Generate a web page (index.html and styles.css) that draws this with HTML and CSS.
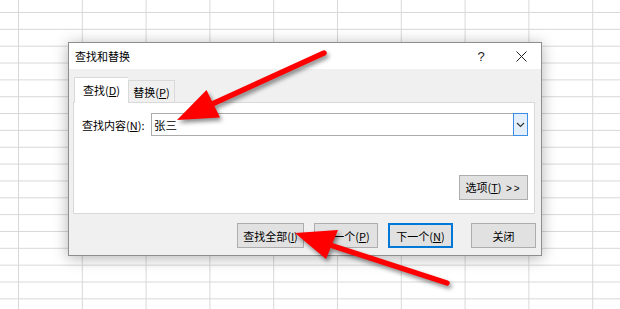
FILE: index.html
```html
<!DOCTYPE html>
<html lang="zh-CN">

<head>
    <meta charset="UTF-8">
    <title>查找和替换</title>
    <link rel="stylesheet" href="styles.css">
</head>

<body>

    <div class="dialog">
        <div class="titlebar">
            <span class="title">查找和替换</span>
            <span class="help">?</span>
            <span class="close">
                <svg width="11" height="11" viewBox="0 0 11 11">
                    <path d="M0.5 0.5 L10.5 10.5 M10.5 0.5 L0.5 10.5" stroke="#222" stroke-width="1" fill="none" />
                </svg>
            </span>
        </div>

        <div class="dlg-body">
            <div class="tabs">
                <div class="tab active">查找(<u>D</u>)</div>
                <div class="tab">替换(<u>P</u>)</div>
            </div>

            <div class="panel">
                <div class="find-row">
                    <label class="find-label">查找内容(<u>N</u>):</label>
                    <div class="combo">
                        <span class="combo-text">张三</span>
                        <span class="combo-btn">
                            <svg width="9" height="6" viewBox="0 0 9 6">
                                <path d="M1 1 L4.5 4.5 L8 1" stroke="#333" stroke-width="1.2" fill="none" />
                            </svg>
                        </span>
                    </div>
                </div>
                <div class="options-row">
                    <button class="btn btn-options">选项(<u>T</u>) <span class="more">&gt;&gt;</span></button>
                </div>
            </div>

            <div class="actions">
                <button class="btn btn-all">查找全部(<u>I</u>)</button>
                <button class="btn btn-prev">上一个(<u>P</u>)</button>
                <button class="btn btn-next">下一个(<u>N</u>)</button>
                <button class="btn btn-close">关闭</button>
            </div>
        </div>
    </div>

    <!-- flechas rojas encima del cuadro -->
    <svg class="arrows" width="620" height="309" viewBox="0 0 620 309">
        <g class="arrow">
            <line x1="324" y1="53" x2="210" y2="105" stroke="#ff0000" stroke-width="5.5" stroke-linecap="round" />
            <polygon points="177,120 206.5,90 220,117.5" fill="#ff0000" />
        </g>
        <g class="arrow">
            <line x1="447" y1="283" x2="330" y2="245" stroke="#ff0000" stroke-width="5.5" stroke-linecap="round" />
            <polygon points="295,233 338,230 326,259" fill="#ff0000" />
        </g>
    </svg>

</body>

</html>
```

FILE: styles.css
```css
body {
    margin: 0;
    width: 620px;
    height: 309px;
    overflow: hidden;
    position: relative;
    box-sizing: border-box;
    padding: 42px 0 0 68px;
    font-family: "Noto Sans CJK SC", "Noto Sans", sans-serif;
    font-size: 11px;
    color: #000;
    background-color: #fff;
    /* rejilla de la hoja de cálculo */
    background-image: linear-gradient(to right, #d8d8d8 1px, transparent 1px),
        linear-gradient(to bottom, #d8d8d8 1px, transparent 1px);
    background-size: 63.8px 100%, 100% 16.85px;
    background-position: 18px 0, 0 12px;
}

.dialog {
    width: 474px;
    height: 214px;
    box-sizing: border-box;
    border: 1px solid #8e8e8e;
    background-color: #f0f0f0;
    box-shadow: 0 2px 14px rgba(0, 0, 0, 0.3);
    display: flex;
    flex-direction: column;
}

.titlebar {
    height: 26px;
    background-color: #fff;
    display: flex;
    align-items: center;
    padding-left: 6px;
}

.title {
    flex: 1;
    line-height: 14px;
}

.help,
.close {
    width: 40px;
    display: flex;
    align-items: center;
    justify-content: center;
}

.help {
    font-family: "Liberation Sans", sans-serif;
    font-size: 13px;
    color: #222;
}

.dlg-body {
    flex: 1;
    padding: 8px 6px 0 4px;
    display: flex;
    flex-direction: column;
}

.tabs {
    display: flex;
    align-items: flex-end;
    margin-left: 1px;
}

.tab {
    height: 22px;
    line-height: 22px;
    box-sizing: border-box;
    border: 1px solid #d9d9d9;
    border-bottom: none;
    background-color: #f0f0f0;
    text-align: center;
    width: 47px;
}

.tab.active {
    width: 54px;
    height: 26px;
    line-height: 25px;
    background-color: #fff;
    margin-bottom: -1px;
    position: relative;
    z-index: 1;
    border-right: none;
}

.panel {
    height: 112px;
    box-sizing: border-box;
    background-color: #fff;
    border: 1px solid #d9d9d9;
    padding: 10px 6px 13px 8px;
    display: flex;
    flex-direction: column;
}

.find-row {
    display: flex;
    align-items: center;
}

.find-label {
    width: 69px;
    line-height: 14px;
}

.combo {
    width: 377px;
    height: 23px;
    box-sizing: border-box;
    border: 1px solid #acacac;
    display: flex;
    align-items: center;
}

.combo-text {
    flex: 1;
    padding-left: 2px;
    font-size: 11.5px;
}

.combo-btn {
    width: 15px;
    height: 23px;
    box-sizing: border-box;
    margin: -1px -1px -1px 0;
    border: 1px solid #3a8ee6;
    background-color: #e3f0fc;
    display: flex;
    align-items: center;
    justify-content: center;
}

.options-row {
    margin-top: auto;
    display: flex;
    justify-content: flex-end;
}

.btn {
    height: 25px;
    box-sizing: border-box;
    border: 1px solid #adadad;
    background-color: #e1e1e1;
    font-family: "Noto Sans CJK SC", "Noto Sans", sans-serif;
    font-size: 11px;
    color: #000;
    padding: 0;
    line-height: 14px;
}

.btn-options {
    width: 69px;
}

.more {
    font-family: "Liberation Sans", sans-serif;
    font-size: 10px;
    letter-spacing: 2px;
    margin-left: 2px;
}

.actions {
    display: flex;
    justify-content: flex-end;
    margin-top: 9px;
    margin-right: -1px;
}

.btn-all {
    width: 67px;
}

.btn-prev {
    width: 64px;
    margin-left: 10px;
}

.btn-next {
    width: 65px;
    margin-left: 10px;
    border-color: #0078d7;
    box-shadow: inset 0 0 0 1px #0078d7;
}

.btn-close {
    width: 65px;
    margin-left: 18px;
}

.arrows {
    position: absolute;
    top: 0;
    left: 0;
    pointer-events: none;
}

.arrow {
    filter: drop-shadow(2px 3px 2px rgba(0, 0, 0, 0.45));
}
```
